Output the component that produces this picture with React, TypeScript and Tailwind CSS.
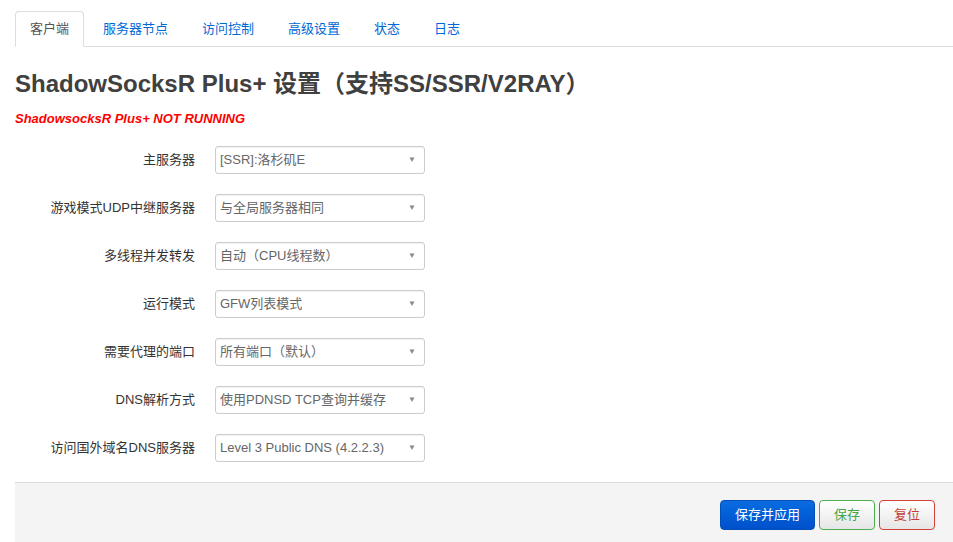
const font = "font-['Liberation_Sans','Noto_Sans_CJK_SC',sans-serif]";

const tabs = ["客户端", "服务器节点", "访问控制", "高级设置", "状态", "日志"];

const fields: [string, string][] = [
  ["主服务器", "[SSR]:洛杉矶E"],
  ["游戏模式UDP中继服务器", "与全局服务器相同"],
  ["多线程并发转发", "自动（CPU线程数）"],
  ["运行模式", "GFW列表模式"],
  ["需要代理的端口", "所有端口（默认）"],
  ["DNS解析方式", "使用PDNSD TCP查询并缓存"],
  ["访问国外域名DNS服务器", "Level 3 Public DNS (4.2.2.3)"],
];

function Select({ value }: { value: string }) {
  return (
    <div className="flex h-[28px] w-[210px] items-center justify-between rounded-[3px] border border-[#ccc] bg-white pl-[4px] pr-[8px] shadow-[inset_0_1px_1px_rgba(0,0,0,0.05)]">
      <span className="truncate text-[13px] text-[#666]">{value}</span>
      <span className="text-[8px] text-[#888]">▼</span>
    </div>
  );
}

export default function App() {
  return (
    <div className={`${font} min-h-[542px] bg-white pl-[15px] text-[#333]`}>
      <div className="flex gap-[4px] border-b border-[#ddd] pt-[11px]">
        {tabs.map((t, i) => (
          <div
            key={t}
            className={
              i === 0
                ? "-mb-px flex h-[36px] items-center rounded-t-[4px] border border-b-white border-[#ddd] bg-white px-[14px] text-[13px] text-[#555]"
                : "flex h-[35px] items-center px-[15px] text-[13px] text-[#0069d6]"
            }
          >
            {t}
          </div>
        ))}
      </div>

      <h2 className="mt-[22px] text-[24px] font-bold leading-[30px] text-[#404040]">
        ShadowSocksR Plus+ 设置（支持SS/SSR/V2RAY）
      </h2>
      <p className="mt-[11px] text-[13px] font-bold italic leading-[18px] text-[#ff0000]">
        ShadowsocksR Plus+ NOT RUNNING
      </p>

      <div className="mt-[18px] flex flex-col gap-[20px]">
        {fields.map(([label, value]) => (
          <div key={label} className="flex items-center">
            <div className="w-[180px] text-right text-[13px] text-[#333]">{label}</div>
            <div className="ml-[20px]">
              <Select value={value} />
            </div>
          </div>
        ))}
      </div>

      <div className="mt-[20px] flex h-[60px] items-start justify-end gap-[4px] border-t border-[#ddd] bg-[#f4f4f4] pr-[18px] pt-[17px]">
        <button className="h-[30px] w-[95px] rounded-[4px] border border-[#0050b8] bg-gradient-to-b from-[#0a6ce0] to-[#0050cc] text-[13px] text-white">
          保存并应用
        </button>
        <button className="h-[30px] w-[56px] rounded-[4px] border border-[#4cae4c] bg-gradient-to-b from-white to-[#e6e6e6] text-[13px] text-[#46a546]">
          保存
        </button>
        <button className="h-[30px] w-[56px] rounded-[4px] border border-[#d43f3a] bg-gradient-to-b from-white to-[#e6e6e6] text-[13px] text-[#c43c35]">
          复位
        </button>
      </div>
    </div>
  );
}
